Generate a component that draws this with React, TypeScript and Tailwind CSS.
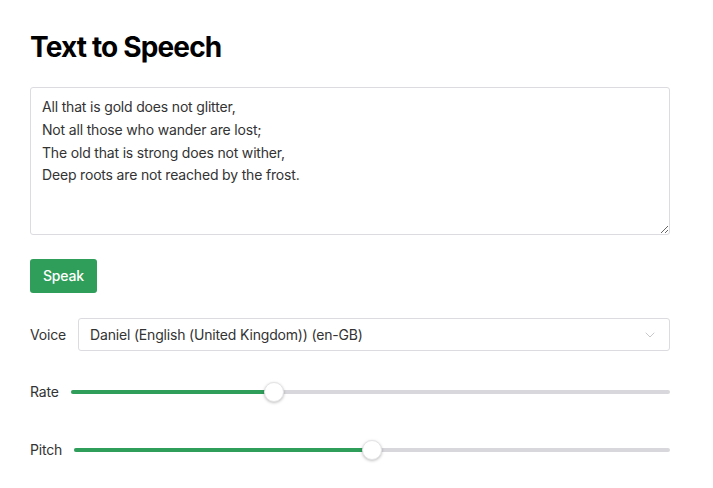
import React, { useState } from 'react';
import { ChevronDown } from 'lucide-react';

const Slider: React.FC<{ value: number; min: number; max: number }> = ({ value, min, max }) => {
  const pct = ((value - min) / (max - min)) * 100;
  return (
    <div className="relative flex-1 h-5 mx-[10px]">
      <div className="absolute -left-[10px] -right-[10px] top-1/2 -translate-y-1/2 h-1 rounded-full bg-[#d8d8dc]" />
      <div
        className="absolute -left-[10px] top-1/2 -translate-y-1/2 h-1 rounded-full bg-[#2f9e5a]"
        style={{ width: `calc(${pct}% + 10px)` }}
      />
      <div
        className="absolute top-1/2 -translate-x-1/2 -translate-y-1/2 w-5 h-5 rounded-full bg-white border border-[#e4e4e7] shadow-[0_1px_3px_rgba(0,0,0,0.25)]"
        style={{ left: `${pct}%` }}
      />
    </div>
  );
};

const App: React.FC = () => {
  const [text, setText] = useState(
    'All that is gold does not glitter,\nNot all those who wander are lost;\nThe old that is strong does not wither,\nDeep roots are not reached by the frost.'
  );

  return (
    <div className="min-h-screen bg-white font-['Inter',sans-serif] text-[#1a1a1a] tracking-[-0.011em]">
      <div className="w-[640px] ml-[30px] pt-[31px]">
        <h1 className="text-[28px] leading-8 font-bold tracking-[-0.03em] text-black mb-6">Text to Speech</h1>

        <textarea
          value={text}
          onChange={(e) => setText(e.target.value)}
          className="block w-full h-[148px] pl-[11px] pr-3 py-2 text-sm leading-[22.8px] text-[#333] border border-[#dcdce0] rounded-[3px] outline-none resize-y"
        />

        <button className="mt-6 h-[34px] px-[13px] rounded-[3px] bg-[#2f9e5a] text-white text-sm font-medium">
          Speak
        </button>

        <div className="mt-[25px] flex items-center gap-3">
          <label className="text-sm text-[#333]">Voice</label>
          <div className="flex-1 h-[33px] flex items-center justify-between pl-[11px] pr-[11px] border border-[#dcdce0] rounded-[3px] text-sm text-[#333]">
            <span>Daniel (English (United Kingdom)) (en-GB)</span>
            <ChevronDown className="w-4 h-4 text-[#c8c8cc]" strokeWidth={1.5} />
          </div>
        </div>

        <div className="mt-[31px] flex items-center gap-3">
          <label className="text-sm text-[#333]">Rate</label>
          <Slider value={1} min={0.5} max={2} />
        </div>

        <div className="mt-[38px] flex items-center gap-3">
          <label className="text-sm text-[#333]">Pitch</label>
          <Slider value={1} min={0} max={2} />
        </div>
      </div>
    </div>
  );
};

export default App;
